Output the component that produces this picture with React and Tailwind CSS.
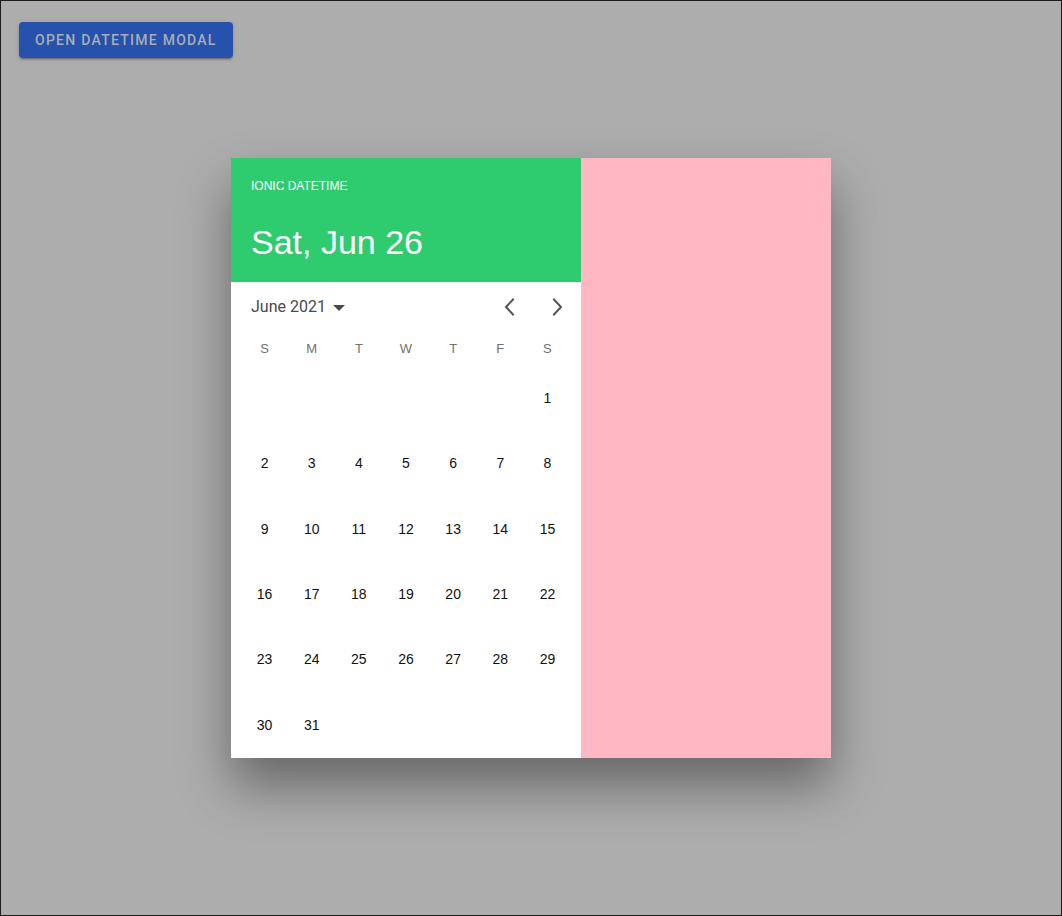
import React from 'react';

const WEEKDAYS = ['S', 'M', 'T', 'W', 'T', 'F', 'S'];

// June 2021 as the picker draws it: six leading blanks, then 1..31
const buildDays = () => {
  const cells = Array(6).fill(null);
  for (let d = 1; d <= 31; d++) cells.push(d);
  while (cells.length < 42) cells.push(null);
  return cells;
};

const Chevron = ({ dir }) => (
  <svg width="24" height="24" viewBox="0 0 24 24" fill="none" stroke="#545454" strokeWidth="2" strokeLinecap="square">
    {dir === 'left' ? <path d="M15 4.5 L8 12 L15 19.5" /> : <path d="M9 4.5 L16 12 L9 19.5" />}
  </svg>
);

const Calendar = () => {
  const days = buildDays();
  return (
    <div className="flex flex-col flex-1 bg-white">
      {/* Month row */}
      <div className="h-[48px] mt-[1px] flex items-center justify-between pl-[20px] pr-[12px]">
        <div className="flex items-center gap-[6px] text-[16px] text-[#4a4a4a]" style={{ fontFamily: 'Roboto, sans-serif' }}>
          <span>June 2021</span>
          <svg width="14" height="8" viewBox="0 0 14 8" className="mt-[1px]">
            <path d="M1 1 L13 1 L7 7 Z" fill="#4a4a4a" />
          </svg>
        </div>
        <div className="flex items-center gap-[23px]">
          <Chevron dir="left" />
          <Chevron dir="right" />
        </div>
      </div>

      {/* Weekday row */}
      <div className="grid grid-cols-7 px-[10px] h-[35px] items-center text-[13px] text-[#707070]">
        {WEEKDAYS.map((w, i) => (
          <div key={i} className="text-center">{w}</div>
        ))}
      </div>

      {/* Days */}
      <div className="grid grid-cols-7 grid-rows-6 px-[10px] flex-1 text-[14px] text-[#111]">
        {days.map((d, i) => (
          <div key={i} className="flex items-center justify-center">
            {d}
          </div>
        ))}
      </div>
    </div>
  );
};

const App = () => {
  return (
    <div
      className="relative w-[1062px] h-[916px] bg-[#adadad] border border-[#1b1b1b] overflow-hidden"
      style={{ fontFamily: '"Liberation Sans", Arial, sans-serif' }}
    >
      <div className="pt-[21px] pl-[18px]">
        <button
          className="h-[36px] px-[16px] rounded-[4px] bg-[#2651ac] text-[#a9adb6] text-[14px] font-medium uppercase tracking-[0.09em] shadow-[0_3px_1px_-2px_rgba(0,0,0,0.2),0_2px_2px_0_rgba(0,0,0,0.14),0_1px_5px_0_rgba(0,0,0,0.12)]"
          style={{ fontFamily: 'Roboto, sans-serif' }}
        >
          Open Datetime Modal
        </button>
      </div>

      {/* Modal layer */}
      <div className="absolute inset-0 flex items-center justify-center">
        <div className="flex w-[600px] h-[600px] shadow-[0_28px_48px_rgba(0,0,0,0.4)]">
          <div className="w-[350px] flex flex-col">
            <div className="h-[124px] bg-[#2ecc6e] px-[20px] pt-[21px] text-white">
              <div className="text-[12px] leading-[14px]">IONIC DATETIME</div>
              <div className="text-[34px] leading-[40px] mt-[29px]">Sat, Jun 26</div>
            </div>
            <Calendar />
          </div>
          <div className="w-[250px] bg-[#ffb8c3]" />
        </div>
      </div>
    </div>
  );
};

export default App;
